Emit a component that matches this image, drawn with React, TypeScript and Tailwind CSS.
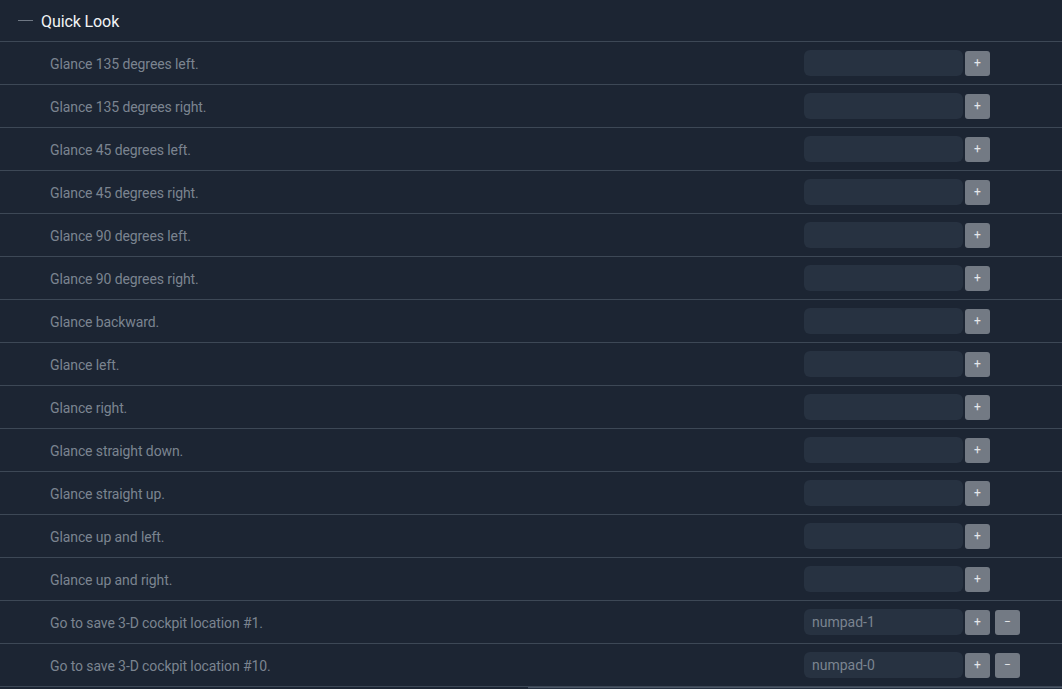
import React from "react";

interface Binding {
  label: string;
  key?: string;
}

const bindings: Binding[] = [
  { label: "Glance 135 degrees left." },
  { label: "Glance 135 degrees right." },
  { label: "Glance 45 degrees left." },
  { label: "Glance 45 degrees right." },
  { label: "Glance 90 degrees left." },
  { label: "Glance 90 degrees right." },
  { label: "Glance backward." },
  { label: "Glance left." },
  { label: "Glance right." },
  { label: "Glance straight down." },
  { label: "Glance straight up." },
  { label: "Glance up and left." },
  { label: "Glance up and right." },
  { label: "Go to save 3-D cockpit location #1.", key: "numpad-1" },
  { label: "Go to save 3-D cockpit location #10.", key: "numpad-0" },
];

const SmallButton: React.FC<{ children: React.ReactNode }> = ({ children }) => (
  <button className="w-[25px] h-[25px] rounded-[3px] bg-[#737a84] text-[#e6e8eb] text-[12px] leading-none flex items-center justify-center">
    {children}
  </button>
);

const App: React.FC = () => {
  return (
    <div
      className="w-[1062px] h-[689px] overflow-hidden bg-[#1c2533]"
      style={{ fontFamily: "Roboto, 'Liberation Sans', sans-serif" }}
    >
      <div className="h-[42px] flex items-center border-b border-[#3d4856]">
        <span className="ml-[18px] w-[15px] h-px bg-[#6f7884]" />
        <span className="ml-[8px] pt-[2px] text-[16px] tracking-[-0.1px] text-[#f2f4f6]">Quick Look</span>
      </div>
      {bindings.map((b, i) => (
        <div key={i} className="h-[43px] flex items-center border-b border-[#3d4856]">
          <span className="ml-[50px] pt-[2px] text-[14px] tracking-[-0.1px] text-[#7b8490] flex-1">{b.label}</span>
          <div className="flex items-center w-[258px]">
            <div className="w-[159px] h-[26px] rounded-[6px] bg-[#273241] flex items-center px-[8px] pt-[1px] text-[14px] text-[#7b8490]">
              {b.key ?? ""}
            </div>
            <div className="ml-[2px]">
              <SmallButton>+</SmallButton>
            </div>
            {b.key && (
              <div className="ml-[5px]">
                <SmallButton>−</SmallButton>
              </div>
            )}
          </div>
        </div>
      ))}
      <div className="flex">
        <div className="w-[528px]" />
        <div className="flex-1 h-[3px] border-t border-[#4a5564] bg-[#243040]" />
      </div>
    </div>
  );
};

export default App;
